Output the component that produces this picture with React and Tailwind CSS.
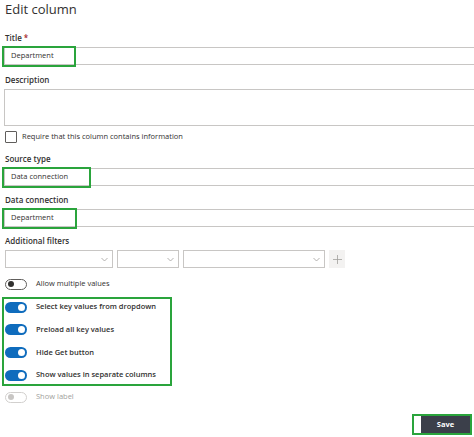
import React from 'react'

const font = { fontFamily: '"Open Sans", "Noto Sans", sans-serif' }

function Label({ children, className = '' }) {
  return <div className={`text-[8px] font-semibold text-[#323130] leading-[10px] ${className}`}>{children}</div>
}

function Field({ value, greenW, className = '' }) {
  return (
    <div className={`relative ml-[4px] w-[480px] h-[18px] border border-[#c8c6c4] bg-white flex items-center ${className}`}>
      <span className="pl-[6px] text-[7.5px] text-[#323130]">{value}</span>
      {greenW && (
        <div className="absolute left-[-3px] top-[-2px] h-[21px] border-2 border-[#2aa43c]" style={{ width: greenW }} />
      )}
    </div>
  )
}

function Chevron() {
  return (
    <svg width="7" height="5" viewBox="0 0 7 5" className="text-[#a19f9d]">
      <path d="M0.5 1 L3.5 4 L6.5 1" fill="none" stroke="currentColor" strokeWidth="0.8" />
    </svg>
  )
}

function Select({ w }) {
  return (
    <div className={`${w} h-[18px] border border-[#c8c6c4] bg-white flex items-center justify-end pr-[4px]`}>
      <Chevron />
    </div>
  )
}

function Toggle({ on, disabled }) {
  if (on) {
    return (
      <div className="w-[22px] h-[11px] rounded-full bg-[#0f6cbd] flex items-center justify-end pr-[2px]">
        <div className="w-[7px] h-[7px] rounded-full bg-white" />
      </div>
    )
  }
  return (
    <div className={`w-[22px] h-[11px] rounded-full border ${disabled ? 'border-[#d2d0ce]' : 'border-[#605e5c]'} bg-white flex items-center pl-[2px]`}>
      <div className={`w-[6px] h-[6px] rounded-full ${disabled ? 'bg-[#c8c6c4]' : 'bg-[#323130]'}`} />
    </div>
  )
}

function ToggleRow({ on, disabled, label, className = '' }) {
  return (
    <div className={`flex items-center gap-[9px] ml-[5px] h-[12px] ${className}`}>
      <Toggle on={on} disabled={disabled} />
      <span className={`text-[7.5px] ${disabled ? 'text-[#a19f9d]' : 'text-[#323130]'} ${on ? 'font-semibold' : ''}`}>{label}</span>
    </div>
  )
}

export default function App() {
  return (
    <div className="w-[474px] h-[437px] bg-white overflow-hidden relative" style={font}>
      <div className="flex flex-col">
        <div className="ml-[5px] mt-[0px] text-[13px] leading-[18px] text-[#323130]">Edit column</div>

        <Label className="ml-[5px] mt-[15px]">Title <span className="text-[#a4262c]">*</span></Label>
        <Field value="Department" greenW={74} className="mt-[4px]" />

        <Label className="ml-[5px] mt-[10px]">Description</Label>
        <div className="ml-[4px] mt-[4px] w-[480px] h-[37px] border border-[#c8c6c4]" />

        <div className="flex items-center gap-[5px] ml-[5px] mt-[5px]">
          <div className="w-[12px] h-[12px] border border-[#605e5c] rounded-[1px]" />
          <span className="text-[7.5px] text-[#323130]">Require that this column contains information</span>
        </div>

        <Label className="ml-[5px] mt-[11px]">Source type</Label>
        <Field value="Data connection" greenW={89} className="mt-[4px]" />

        <Label className="ml-[5px] mt-[9px]">Data connection</Label>
        <Field value="Department" greenW={75} className="mt-[4px]" />

        <Label className="ml-[5px] mt-[9px]">Additional filters</Label>
        <div className="flex items-center gap-[4px] ml-[5px] mt-[4px]">
          <Select w="w-[108px]" />
          <Select w="w-[62px]" />
          <Select w="w-[142px]" />
          <div className="w-[16px] h-[18px] bg-[#f3f2f1] flex items-center justify-center">
            <svg width="9" height="9" viewBox="0 0 9 9" className="text-[#a19f9d]">
              <path d="M4.5 0 V9 M0 4.5 H9" stroke="currentColor" strokeWidth="0.8" />
            </svg>
          </div>
        </div>

        <ToggleRow label="Allow multiple values" className="mt-[10px]" />

        <div className="relative mt-[8px]">
          <div className="flex flex-col gap-[10.7px] pt-[3px]">
            <ToggleRow on label="Select key values from dropdown" />
            <ToggleRow on label="Preload all key values" />
            <ToggleRow on label="Hide Get button" />
            <ToggleRow on label="Show values in separate columns" />
          </div>
          <div className="absolute left-[2px] top-[-1px] w-[170px] h-[89px] border-2 border-[#2aa43c]" />
        </div>

        <ToggleRow disabled label="Show label" className="mt-[10px]" />

        <div className="flex justify-end mr-[2px] mt-[11px]">
          <div className="border-2 border-[#2aa43c] pl-[7px] bg-white">
            <div className="w-[49px] h-[17px] bg-[#3b3f4a] flex items-center justify-center text-white text-[7.5px] font-bold">Save</div>
          </div>
        </div>
      </div>
    </div>
  )
}
